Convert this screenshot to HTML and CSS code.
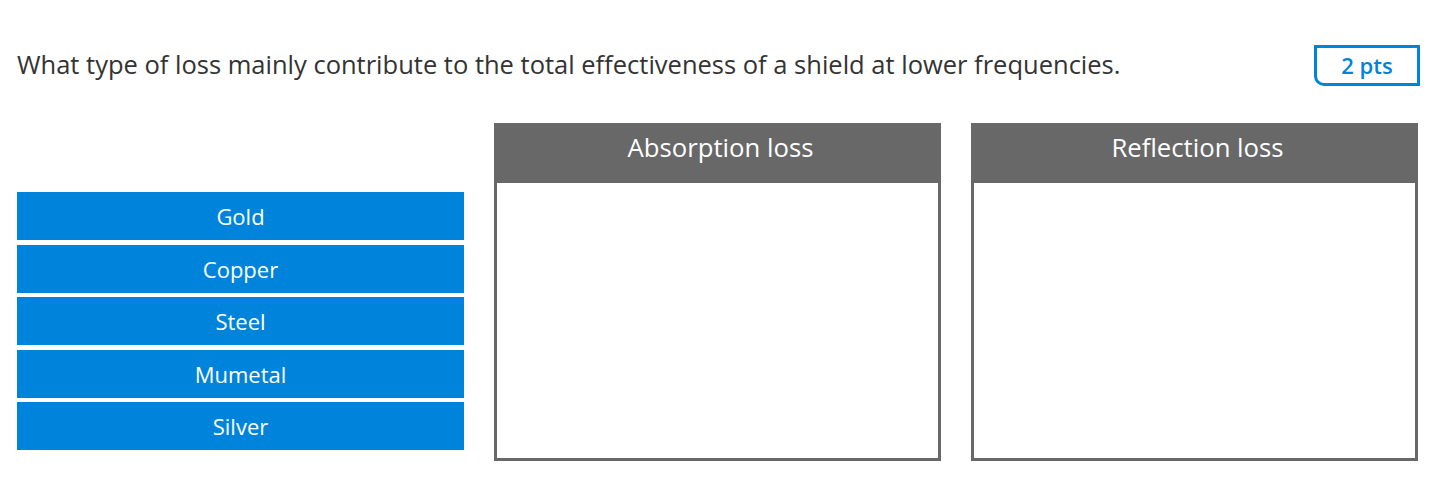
FILE: index.html
```html
<!DOCTYPE html>
<html lang="en">
<head>
    <meta charset="UTF-8">
    <meta name="viewport" content="width=device-width, initial-scale=1.0">
    <title>Quiz question</title>
    <link rel="stylesheet" href="styles.css">
</head>
<body>
    <div class="question">
        <div class="question-header">
            <p class="question-text">What type of loss mainly contribute to the total effectiveness of a shield at lower frequencies.</p>
            <div class="points">2 pts</div>
        </div>

        <div class="match-area">
            <!-- draggable answers -->
            <ul class="choices">
                <li class="choice">Gold</li>
                <li class="choice">Copper</li>
                <li class="choice">Steel</li>
                <li class="choice">Mumetal</li>
                <li class="choice">Silver</li>
            </ul>

            <!-- drop targets -->
            <div class="bucket">
                <div class="bucket-title">Absorption loss</div>
                <div class="bucket-body"></div>
            </div>
            <div class="bucket">
                <div class="bucket-title">Reflection loss</div>
                <div class="bucket-body"></div>
            </div>
        </div>
    </div>
</body>
</html>
```

FILE: styles.css
```css
body {
    margin: 0;
    background-color: #ffffff;
    color: #333333;
    font-family: "Open Sans", "Liberation Sans", sans-serif;
}

.question {
    width: 1403px;
    padding: 45px 0 0 17px;
}

.question-header {
    display: flex;
    justify-content: space-between;
    align-items: flex-start;
}

.question-text {
    margin: 3px 0 0 0;
    font-size: 25.5px;
    line-height: 32px;
    color: #333333;
}

.points {
    width: 100px;
    height: 35px;
    border: 3px solid #0084db;
    border-radius: 0 0 0 10px;
    color: #0084db;
    font-size: 22px;
    font-weight: 600;
    line-height: 34px;
    text-align: center;
}

.match-area {
    display: flex;
    align-items: flex-start;
    gap: 30px;
    margin-top: 37px;
}

.choices {
    list-style: none;
    margin: 69px 0 0 0;
    padding: 0;
    width: 447px;
    display: flex;
    flex-direction: column;
    gap: 4.5px;
}

.choice {
    height: 48px;
    line-height: 48px;
    background-color: #0084db;
    color: #ffffff;
    font-size: 22px;
    text-align: center;
}

.bucket {
    width: 447px;
    height: 338px;
    box-sizing: border-box;
    border: 3px solid #686868;
    display: flex;
    flex-direction: column;
}

.bucket-title {
    height: 57px;
    padding-left: 6px;
    background-color: #686868;
    color: #ffffff;
    font-size: 25.7px;
    line-height: 44px;
    text-align: center;
}

.bucket-body {
    flex: 1;
    background-color: #ffffff;
}
```
